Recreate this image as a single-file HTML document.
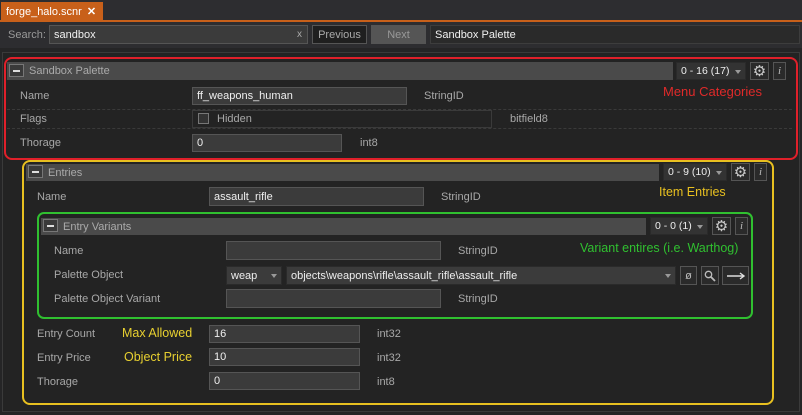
<!DOCTYPE html>
<html><head><meta charset="utf-8"><style>
*{box-sizing:border-box;margin:0;padding:0}
body{width:802px;height:415px;background:#252526;position:relative;overflow:hidden;font-family:"Liberation Sans",sans-serif;font-size:11px;color:#e8e8e8}
.a{position:absolute;white-space:nowrap}
.lbl{position:absolute;color:#a8a8a8;font-size:11px;line-height:14px;white-space:nowrap}
.inp{position:absolute;background:#3b3b3b;border:1px solid #555;color:#f0f0f0;padding:0 4px;font-size:11px;display:flex;align-items:center;white-space:nowrap}
.hdr{position:absolute;background:#4a4a4a;color:#aaa;font-size:11px;display:flex;align-items:center;padding-left:22px}
.min{position:absolute;left:2px;top:2px;width:15px;height:13px;border:1px solid #777;background:#3a3a3a}
.min:after{content:"";position:absolute;left:3px;top:5px;width:7px;height:2px;background:#ddd}
.dd{position:absolute;background:#333;border:1px solid #2a2a2a;color:#eee;font-size:10.5px;display:flex;align-items:center;padding-left:4px;padding-right:14px;white-space:nowrap;overflow:hidden}
.dd:after{content:"";position:absolute;right:4px;top:7px;border:3px solid transparent;border-top:4px solid #999}
.btn{position:absolute;border:1px solid #555;background:#2a2a2a;color:#bbb;display:flex;align-items:center;justify-content:center}
.sep{position:absolute;border-top:1px dashed #3a3a3a}
</style></head><body>
<div class="a" style="left:0;top:0;width:802px;height:21px;background:#2d2d30"></div>
<div class="a" style="left:0;top:20px;width:802px;height:2px;background:#c8601a"></div>
<div class="a" style="left:1px;top:2px;width:102px;height:19px;background:#c8601a;color:#fff;font-size:11px;padding:3px 0 0 5px">forge_halo.scnr<span style="margin-left:5px;font-weight:bold">✕</span></div>
<div class="a" style="left:0;top:22px;width:802px;height:26px;background:#2d2d30"></div>
<div class="lbl" style="left:8px;top:28px;color:#999">Search:</div>
<div class="inp" style="left:49px;top:25px;width:259px;height:19px">sandbox<span style="position:absolute;right:5px;color:#aaa;font-size:10px">x</span></div>
<div class="btn" style="left:312px;top:25px;width:55px;height:19px;background:#1f1f1f;color:#aaa">Previous</div>
<div class="btn" style="left:371px;top:25px;width:55px;height:19px;background:#555;color:#999">Next</div>
<div class="inp" style="left:430px;top:25px;width:370px;height:19px;background:#2a2a2a;border-color:#3d3d3d">Sandbox Palette</div>
<div class="a" style="left:2px;top:52px;width:798px;height:360px;border:1px solid #3a3a3a;background:#232323"></div>

<div class="hdr" style="left:7px;top:62px;width:666px;height:18px">Sandbox Palette<div class="min"></div></div>
<div class="dd" style="left:676px;top:62px;width:70px;height:18px">0 - 16 (17)</div>
<div class="btn" style="left:750px;top:62px;width:19px;height:18px;font-size:15px;color:#ccc">⚙</div>
<div class="btn" style="left:773px;top:62px;width:13px;height:18px;font-style:italic;font-family:'Liberation Serif',serif">i</div>
<div class="lbl" style="left:20px;top:89px">Name</div>
<div class="inp" style="left:192px;top:87px;width:215px;height:18px">ff_weapons_human</div>
<div class="lbl" style="left:424px;top:89px">StringID</div>
<div class="sep" style="left:7px;top:109px;width:785px"></div>
<div class="lbl" style="left:20px;top:112px">Flags</div>
<div class="a" style="left:192px;top:110px;width:300px;height:18px;border:1px solid #3a3a3a"></div>
<div class="a" style="left:198px;top:113px;width:11px;height:11px;border:1px solid #777;background:#333"></div>
<div class="lbl" style="left:217px;top:112px">Hidden</div>
<div class="lbl" style="left:510px;top:112px">bitfield8</div>
<div class="sep" style="left:7px;top:128px;width:785px"></div>
<div class="lbl" style="left:20px;top:136px">Thorage</div>
<div class="inp" style="left:192px;top:134px;width:150px;height:18px">0</div>
<div class="lbl" style="left:360px;top:136px">int8</div>
<div class="a" style="left:663px;top:84px;color:#e02a2a;font-size:13px">Menu Categories</div>
<div class="a" style="left:4px;top:57px;width:794px;height:103px;border:2px solid #e0202a;border-radius:8px"></div>

<div class="hdr" style="left:26px;top:164px;width:633px;height:17px">Entries<div class="min" style="top:1px"></div></div>
<div class="dd" style="left:663px;top:163px;width:64px;height:18px">0 - 9 (10)</div>
<div class="btn" style="left:731px;top:163px;width:19px;height:18px;font-size:15px;color:#ccc">⚙</div>
<div class="btn" style="left:754px;top:163px;width:13px;height:18px;font-style:italic;font-family:'Liberation Serif',serif">i</div>
<div class="lbl" style="left:37px;top:190px">Name</div>
<div class="inp" style="left:209px;top:187px;width:215px;height:19px">assault_rifle</div>
<div class="lbl" style="left:441px;top:190px">StringID</div>
<div class="a" style="left:659px;top:185px;color:#e8c020;font-size:12.5px">Item Entries</div>

<div class="hdr" style="left:41px;top:218px;width:605px;height:17px">Entry Variants<div class="min" style="top:1px"></div></div>
<div class="dd" style="left:650px;top:217px;width:58px;height:18px">0 - 0 (1)</div>
<div class="btn" style="left:712px;top:217px;width:19px;height:18px;font-size:15px;color:#ccc">⚙</div>
<div class="btn" style="left:735px;top:217px;width:13px;height:18px;font-style:italic;font-family:'Liberation Serif',serif">i</div>
<div class="lbl" style="left:54px;top:244px">Name</div>
<div class="inp" style="left:226px;top:241px;width:215px;height:19px"></div>
<div class="lbl" style="left:458px;top:244px">StringID</div>
<div class="a" style="left:580px;top:241px;color:#30c030;font-size:12.5px">Variant entires (i.e. Warthog)</div>
<div class="lbl" style="left:54px;top:268px">Palette Object</div>
<div class="dd" style="left:226px;top:266px;width:56px;height:19px;background:#3b3b3b;font-size:11px">weap</div>
<div class="dd" style="left:286px;top:266px;width:390px;height:19px;background:#3b3b3b;font-size:11px">objects\weapons\rifle\assault_rifle\assault_rifle</div>
<div class="btn" style="left:680px;top:266px;width:17px;height:19px">ø</div>
<div class="btn" style="left:701px;top:266px;width:18px;height:19px"><svg width="12" height="12" viewBox="0 0 12 12"><circle cx="4.5" cy="4.5" r="3.2" fill="none" stroke="#bbb" stroke-width="1.3"/><path d="M7 7L11 11" stroke="#bbb" stroke-width="1.8"/></svg></div>
<div class="btn" style="left:722px;top:266px;width:27px;height:19px"><svg width="20" height="8" viewBox="0 0 20 8"><path d="M1 4H18M14 1L18 4L14 7" fill="none" stroke="#ddd" stroke-width="1.4"/></svg></div>
<div class="lbl" style="left:54px;top:292px">Palette Object Variant</div>
<div class="inp" style="left:226px;top:289px;width:215px;height:19px"></div>
<div class="lbl" style="left:458px;top:292px">StringID</div>
<div class="a" style="left:37px;top:212px;width:716px;height:107px;border:2px solid #30c030;border-radius:7px"></div>

<div class="lbl" style="left:37px;top:327px">Entry Count</div>
<div class="a" style="left:122px;top:326px;color:#e8d030;font-size:12.5px">Max Allowed</div>
<div class="inp" style="left:209px;top:325px;width:151px;height:18px">16</div>
<div class="lbl" style="left:377px;top:327px">int32</div>
<div class="lbl" style="left:37px;top:351px">Entry Price</div>
<div class="a" style="left:124px;top:350px;color:#e8d030;font-size:12.5px">Object Price</div>
<div class="inp" style="left:209px;top:348px;width:151px;height:18px">10</div>
<div class="lbl" style="left:377px;top:351px">int32</div>
<div class="lbl" style="left:37px;top:375px">Thorage</div>
<div class="inp" style="left:209px;top:372px;width:151px;height:18px">0</div>
<div class="lbl" style="left:377px;top:375px">int8</div>
<div class="a" style="left:22px;top:160px;width:752px;height:245px;border:2px solid #e8c020;border-radius:8px"></div>
</body></html>
